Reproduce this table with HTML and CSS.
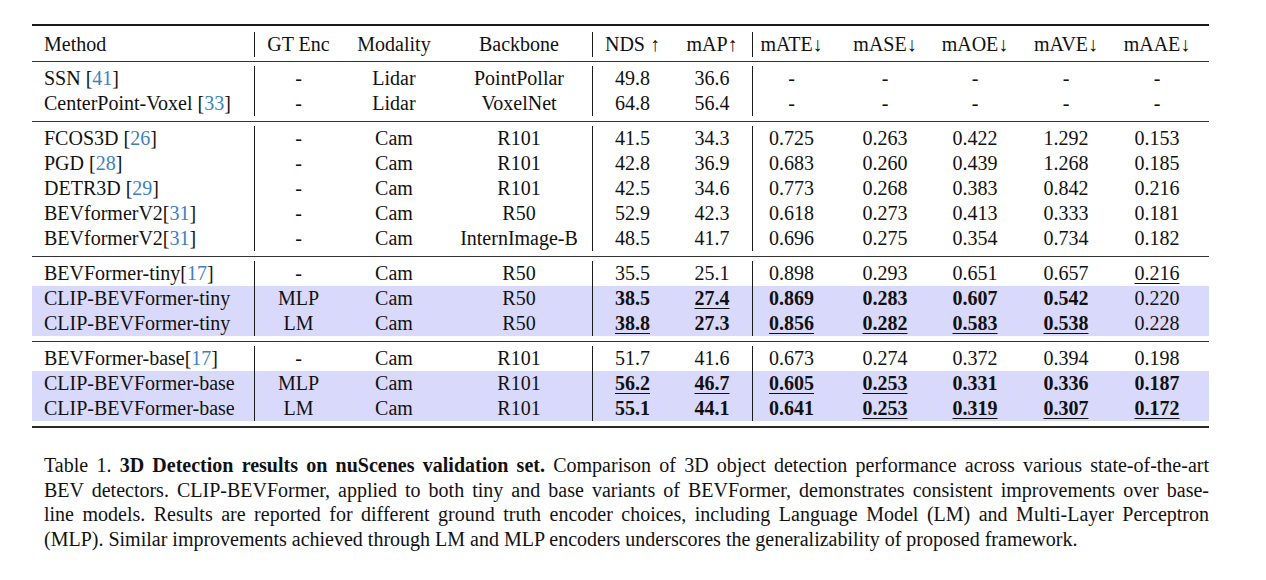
FILE: index.html
```html
<!DOCTYPE html>
<html>
<head>
<meta charset="utf-8">
<link rel="stylesheet" href="styles.css">
</head>
<body>
<div class="page">
  <div class="table">
    <div class="group head">
      <div class="row">
        <div class="cell left">Method</div>
        <div class="cell vl">GT Enc</div>
        <div class="cell">Modality</div>
        <div class="cell">Backbone</div>
        <div class="cell vl">NDS ↑</div>
        <div class="cell">mAP↑</div>
        <div class="cell vl">mATE↓</div>
        <div class="cell">mASE↓</div>
        <div class="cell">mAOE↓</div>
        <div class="cell">mAVE↓</div>
        <div class="cell">mAAE↓</div>
        <div class="cell"></div>
      </div>
    </div>

    <div class="group">
      <div class="row">
        <div class="cell left">SSN [<span class="cite">41</span>]</div>
        <div class="cell vl">-</div><div class="cell">Lidar</div><div class="cell">PointPollar</div>
        <div class="cell vl">49.8</div><div class="cell">36.6</div>
        <div class="cell vl">-</div><div class="cell">-</div><div class="cell">-</div><div class="cell">-</div><div class="cell">-</div><div class="cell"></div>
      </div>
      <div class="row">
        <div class="cell left">CenterPoint-Voxel [<span class="cite">33</span>]</div>
        <div class="cell vl">-</div><div class="cell">Lidar</div><div class="cell">VoxelNet</div>
        <div class="cell vl">64.8</div><div class="cell">56.4</div>
        <div class="cell vl">-</div><div class="cell">-</div><div class="cell">-</div><div class="cell">-</div><div class="cell">-</div><div class="cell"></div>
      </div>
    </div>

    <div class="group">
      <div class="row">
        <div class="cell left">FCOS3D [<span class="cite">26</span>]</div>
        <div class="cell vl">-</div><div class="cell">Cam</div><div class="cell">R101</div>
        <div class="cell vl">41.5</div><div class="cell">34.3</div>
        <div class="cell vl">0.725</div><div class="cell">0.263</div><div class="cell">0.422</div><div class="cell">1.292</div><div class="cell">0.153</div><div class="cell"></div>
      </div>
      <div class="row">
        <div class="cell left">PGD [<span class="cite">28</span>]</div>
        <div class="cell vl">-</div><div class="cell">Cam</div><div class="cell">R101</div>
        <div class="cell vl">42.8</div><div class="cell">36.9</div>
        <div class="cell vl">0.683</div><div class="cell">0.260</div><div class="cell">0.439</div><div class="cell">1.268</div><div class="cell">0.185</div><div class="cell"></div>
      </div>
      <div class="row">
        <div class="cell left">DETR3D [<span class="cite">29</span>]</div>
        <div class="cell vl">-</div><div class="cell">Cam</div><div class="cell">R101</div>
        <div class="cell vl">42.5</div><div class="cell">34.6</div>
        <div class="cell vl">0.773</div><div class="cell">0.268</div><div class="cell">0.383</div><div class="cell">0.842</div><div class="cell">0.216</div><div class="cell"></div>
      </div>
      <div class="row">
        <div class="cell left">BEVformerV2[<span class="cite">31</span>]</div>
        <div class="cell vl">-</div><div class="cell">Cam</div><div class="cell">R50</div>
        <div class="cell vl">52.9</div><div class="cell">42.3</div>
        <div class="cell vl">0.618</div><div class="cell">0.273</div><div class="cell">0.413</div><div class="cell">0.333</div><div class="cell">0.181</div><div class="cell"></div>
      </div>
      <div class="row">
        <div class="cell left">BEVformerV2[<span class="cite">31</span>]</div>
        <div class="cell vl">-</div><div class="cell">Cam</div><div class="cell">InternImage-B</div>
        <div class="cell vl">48.5</div><div class="cell">41.7</div>
        <div class="cell vl">0.696</div><div class="cell">0.275</div><div class="cell">0.354</div><div class="cell">0.734</div><div class="cell">0.182</div><div class="cell"></div>
      </div>
    </div>

    <div class="group">
      <div class="row">
        <div class="cell left">BEVFormer-tiny[<span class="cite">17</span>]</div>
        <div class="cell vl">-</div><div class="cell">Cam</div><div class="cell">R50</div>
        <div class="cell vl">35.5</div><div class="cell">25.1</div>
        <div class="cell vl">0.898</div><div class="cell">0.293</div><div class="cell">0.651</div><div class="cell">0.657</div><div class="cell"><span class="u">0.216</span></div><div class="cell"></div>
      </div>
      <div class="row hl">
        <div class="cell left">CLIP-BEVFormer-tiny</div>
        <div class="cell vl">MLP</div><div class="cell">Cam</div><div class="cell">R50</div>
        <div class="cell vl"><b>38.5</b></div><div class="cell"><b class="u">27.4</b></div>
        <div class="cell vl"><b>0.869</b></div><div class="cell"><b>0.283</b></div><div class="cell"><b>0.607</b></div><div class="cell"><b>0.542</b></div><div class="cell">0.220</div><div class="cell"></div>
      </div>
      <div class="row hl">
        <div class="cell left">CLIP-BEVFormer-tiny</div>
        <div class="cell vl">LM</div><div class="cell">Cam</div><div class="cell">R50</div>
        <div class="cell vl"><b class="u">38.8</b></div><div class="cell"><b>27.3</b></div>
        <div class="cell vl"><b class="u">0.856</b></div><div class="cell"><b class="u">0.282</b></div><div class="cell"><b class="u">0.583</b></div><div class="cell"><b class="u">0.538</b></div><div class="cell">0.228</div><div class="cell"></div>
      </div>
    </div>

    <div class="group">
      <div class="row">
        <div class="cell left">BEVFormer-base[<span class="cite">17</span>]</div>
        <div class="cell vl">-</div><div class="cell">Cam</div><div class="cell">R101</div>
        <div class="cell vl">51.7</div><div class="cell">41.6</div>
        <div class="cell vl">0.673</div><div class="cell">0.274</div><div class="cell">0.372</div><div class="cell">0.394</div><div class="cell">0.198</div><div class="cell"></div>
      </div>
      <div class="row hl">
        <div class="cell left">CLIP-BEVFormer-base</div>
        <div class="cell vl">MLP</div><div class="cell">Cam</div><div class="cell">R101</div>
        <div class="cell vl"><b class="u">56.2</b></div><div class="cell"><b class="u">46.7</b></div>
        <div class="cell vl"><b class="u">0.605</b></div><div class="cell"><b class="u">0.253</b></div><div class="cell"><b>0.331</b></div><div class="cell"><b>0.336</b></div><div class="cell"><b>0.187</b></div><div class="cell"></div>
      </div>
      <div class="row hl">
        <div class="cell left">CLIP-BEVFormer-base</div>
        <div class="cell vl">LM</div><div class="cell">Cam</div><div class="cell">R101</div>
        <div class="cell vl"><b>55.1</b></div><div class="cell"><b>44.1</b></div>
        <div class="cell vl"><b>0.641</b></div><div class="cell"><b class="u">0.253</b></div><div class="cell"><b class="u">0.319</b></div><div class="cell"><b class="u">0.307</b></div><div class="cell"><b class="u">0.172</b></div><div class="cell"></div>
      </div>
    </div>
  </div>

  <div class="caption">
    <div class="line">Table 1. <b>3D Detection results on nuScenes validation set.</b> Comparison of 3D object detection performance across various state-of-the-art</div>
    <div class="line">BEV detectors. CLIP-BEVFormer, applied to both tiny and base variants of BEVFormer, demonstrates consistent improvements over base-</div>
    <div class="line">line models. Results are reported for different ground truth encoder choices, including Language Model (LM) and Multi-Layer Perceptron</div>
    <div class="line last">(MLP). Similar improvements achieved through LM and MLP encoders underscores the generalizability of proposed framework.</div>
  </div>
</div>
</body>
</html>
```

FILE: styles.css
```css
html, body {
  margin: 0;
  padding: 0;
  background: #ffffff;
}

.page {
  padding: 24px 0 0 32px;
  width: 1177px;
  font-family: "Liberation Serif", Tinos, "DejaVu Serif", serif;
  font-size: 20px;
  color: #111111;
}

.table {
  width: 1177px;
  border-top: 2px solid #1a1a1a;
  border-bottom: 2px solid #2a2a2a;
}

.group {
  padding: 4px 0 5px 0;
  border-top: 1px solid #333333;
}

.group.head {
  border-top: none;
  padding: 6px 0 4px 0;
}

.row {
  display: grid;
  grid-template-columns: 222px 88px 104px 146px 80px 80px 78px 110px 70px 112px 70px 17px;
  height: 25px;
  line-height: 25px;
}

.row.hl {
  background: #d9d9fc;
}

.cell {
  text-align: center;
  white-space: nowrap;
}

.cell.left {
  text-align: left;
  padding-left: 12px;
}

.cell.vl {
  border-left: 1px solid #1a1a1a;
}

.cite {
  color: #3d7fc0;
}

b {
  font-weight: bold;
}

.u {
  text-decoration: underline;
  text-decoration-thickness: 1px;
  text-underline-offset: 3px;
}

.caption {
  margin-top: 25px;
  margin-left: 12px;
  width: 1165px;
  line-height: 24.5px;
}

.caption .line {
  text-align: justify;
  text-align-last: justify;
  white-space: nowrap;
}

.caption .line.last {
  text-align: left;
  text-align-last: left;
}
```
